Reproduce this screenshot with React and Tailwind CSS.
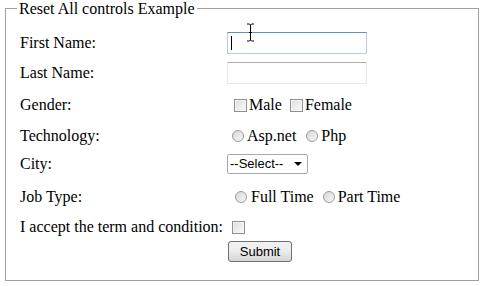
import React from 'react';

function Check() {
  return (
    <span className="inline-block w-[13px] h-[13px] border border-[#8e8f8f] bg-gradient-to-br from-[#dcdcdc] to-[#fbfbfb] shadow-[inset_0_0_0_1px_#f4f4f4] align-middle" />
  );
}

function Radio() {
  return (
    <span className="inline-block w-[12px] h-[12px] rounded-full border border-[#9a9a9a] bg-gradient-to-br from-[#d6d6d6] to-[#f8f8f8] align-middle" />
  );
}

function Row({ label, h, children }) {
  return (
    <div className={`flex items-center ${h}`}>
      <div className="w-[210px] shrink-0 pl-[3px]">{label}</div>
      <div className="flex items-center">{children}</div>
    </div>
  );
}

export default function App() {
  return (
    <div className="w-[484px] h-[286px] bg-white pt-0 pl-[5px] text-[16px] text-black" style={{ fontFamily: '"Liberation Serif", "Times New Roman", serif' }}>
      <fieldset className="relative w-[474px] h-[281px] border border-[#a0a0a0] pl-[11px] pt-[10px]">
        <legend className="px-[2px] leading-[17px]">Reset All controls Example</legend>

        <Row label="First Name:" h="h-[31px]">
          <div className="relative w-[140px] h-[22px] border border-[#b5cfe7] border-t-[#5794bf]">
            <span className="absolute left-[3px] top-[3px] w-[1px] h-[14px] bg-black" />
          </div>
        </Row>
        <Row label="Last Name:" h="h-[30px]">
          <div className="w-[140px] h-[22px] border border-[#e3e9ef] border-t-[#abadb3]" />
        </Row>
        <Row label="Gender:" h="h-[34px]">
          <div className="flex items-center pl-[7px]">
            <Check />
            <span className="ml-[2px]">Male</span>
            <span className="ml-[8px] flex items-center"><Check /></span>
            <span className="ml-[2px]">Female</span>
          </div>
        </Row>
        <Row label="Technology:" h="h-[28px]">
          <div className="flex items-center pl-[5px]">
            <Radio />
            <span className="ml-[3px]">Asp.net</span>
            <span className="ml-[10px] flex items-center"><Radio /></span>
            <span className="ml-[3px]">Php</span>
          </div>
        </Row>
        <Row label="City:" h="h-[28px]">
          <div className="relative w-[81px] h-[20px] border border-[#a9a9a9] rounded-[2px] flex items-center pl-[2px] text-[13px]" style={{ fontFamily: '"Liberation Sans", Arial, sans-serif' }}>
            <span>--Select--</span>
            <span className="absolute right-[5px] top-[7px] w-0 h-0 border-l-[4px] border-r-[4px] border-t-[4px] border-l-transparent border-r-transparent border-t-black" />
          </div>
        </Row>
        <Row label="Job Type:" h="h-[38px]">
          <div className="flex items-center pl-[8px]">
            <Radio />
            <span className="ml-[4px]">Full Time</span>
            <span className="ml-[9px] flex items-center"><Radio /></span>
            <span className="ml-[3px]">Part Time</span>
          </div>
        </Row>
        <div className="flex items-center h-[22px] pl-[3px]">
          <span>I accept the term and condition:</span>
          <span className="ml-[9px] flex items-center"><Check /></span>
        </div>
        <div className="pl-[211px] pt-[1px]">
          <button className="w-[64px] h-[21px] border border-[#707070] rounded-[3px] bg-gradient-to-b from-[#f2f2f2] via-[#ebebeb] to-[#d6d6d6] text-[13px] leading-[19px]" style={{ fontFamily: '"Liberation Sans", Arial, sans-serif' }}>
            Submit
          </button>
        </div>

        <svg className="absolute left-[240px] top-[6px]" width="9" height="19" viewBox="0 0 9 19">
          <path d="M1 1h2.5l1 1 1-1H8M4.5 2v15M1 18h2.5l1-1 1 1H8M3 9.5h3" stroke="#000" strokeWidth="1" fill="none" />
        </svg>
      </fieldset>
    </div>
  );
}
